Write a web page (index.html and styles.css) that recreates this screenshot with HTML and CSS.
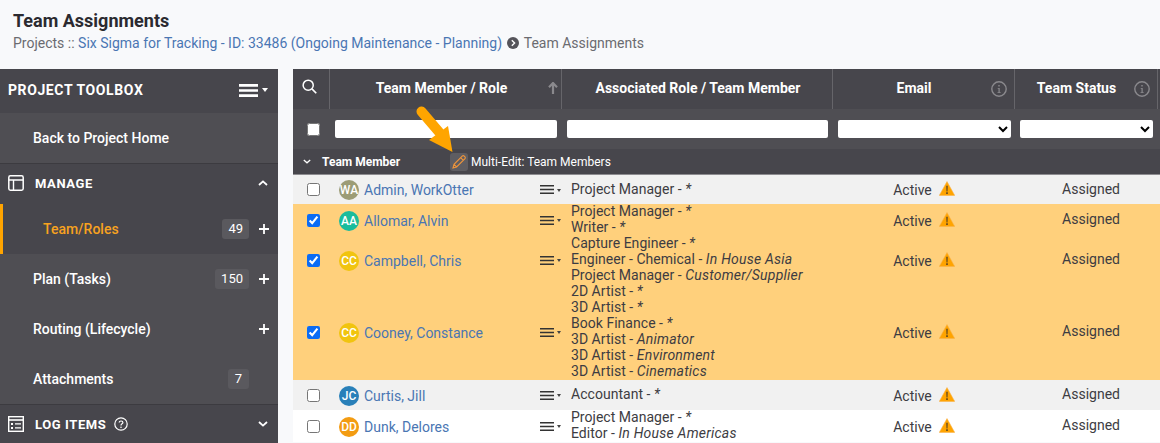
FILE: index.html
```html
<!DOCTYPE html>
<html lang="en">
<head>
<meta charset="utf-8">
<title>Team Assignments</title>
<link rel="stylesheet" href="styles.css">
</head>
<body>
<svg class="defs" width="0" height="0" aria-hidden="true">
  <symbol id="bars" viewBox="0 0 14 9"><path d="M0 .8h14M0 4.5h14M0 8.2h14" fill="none" stroke="currentColor" stroke-width="1.5"/></symbol>
  <symbol id="bars-bold" viewBox="0 0 19 13"><path d="M0 1.4h19M0 6.5h19M0 11.6h19" fill="none" stroke="currentColor" stroke-width="2.6"/></symbol>
  <symbol id="warn" viewBox="0 0 16 15"><path d="M8 .6 15.7 14.4H.3z" fill="#ffa400" stroke="#f9b24a" stroke-width=".6"/><path d="M7.3 4.8h1.4l-.2 5.6h-1zM7.2 11.2h1.6v1.7H7.2z" fill="#5a4320"/></symbol>
  <symbol id="info" viewBox="0 0 16 16"><circle cx="8" cy="8" r="7.2" fill="none" stroke="currentColor" stroke-width="1.4"/><path d="M6.7 6.9h2v4.4h1v.8H6.5v-.8h1V7.7h-.8zM7.3 3.9h1.4v1.6H7.3z" fill="currentColor"/></symbol>
  <symbol id="plus" viewBox="0 0 10 10"><path d="M5 0v10M0 5h10" fill="none" stroke="currentColor" stroke-width="1.8"/></symbol>
</svg>

<header class="page-head">
  <h1 class="page-title">Team Assignments</h1>
  <p class="crumbs">Projects :: <a class="link" href="#">Six Sigma for Tracking - ID: 33486 (Ongoing Maintenance - Planning)</a>
    <svg class="crumb-sep" viewBox="0 0 12 12"><circle cx="6" cy="6" r="6" fill="#55545a"/><path d="M4.8 3.2 7.6 6 4.8 8.8" fill="none" stroke="#fff" stroke-width="1.4"/></svg>
    Team Assignments</p>
</header>

<div class="content">
  <aside class="sidebar">
    <div class="tool-head">
      <span class="tool-title">PROJECT TOOLBOX</span>
      <svg class="tool-bars"><use href="#bars-bold"/></svg>
      <span class="caret-w"></span>
    </div>
    <a class="nav-item nav-back" href="#"><span class="nav-label">Back to Project Home</span></a>
    <div class="section section-manage">
      <svg class="sec-icon" viewBox="0 0 16 16"><rect x=".8" y=".8" width="14.4" height="14.4" rx="1.6" fill="none" stroke="currentColor" stroke-width="1.5"/><path d="M.8 5h14.4M5.5 5v10" fill="none" stroke="currentColor" stroke-width="1.4"/></svg>
      <span class="sec-label">MANAGE</span>
      <svg class="sec-chev" viewBox="0 0 10 6"><path d="M1 5 5 1.4 9 5" fill="none" stroke="currentColor" stroke-width="1.8"/></svg>
    </div>
    <a class="nav-item nav-active" href="#"><span class="nav-label">Team/Roles</span><span class="badge">49</span><svg class="nav-plus"><use href="#plus"/></svg></a>
    <a class="nav-item" href="#"><span class="nav-label">Plan (Tasks)</span><span class="badge">150</span><svg class="nav-plus"><use href="#plus"/></svg></a>
    <a class="nav-item" href="#"><span class="nav-label">Routing (Lifecycle)</span><svg class="nav-plus"><use href="#plus"/></svg></a>
    <a class="nav-item nav-noplus" href="#"><span class="nav-label">Attachments</span><span class="badge">7</span></a>
    <div class="section section-log">
      <svg class="sec-icon" viewBox="0 0 16 16"><rect x=".7" y=".7" width="14.6" height="14.6" fill="none" stroke="currentColor" stroke-width="1.4"/><path d="M.7 4h14.6" stroke="currentColor" stroke-width="1.6"/><path d="M3 7h2v2H3zM3 11h2v2H3zM7 7.2h6v1.3H7zM7 11.2h6v1.3H7z" fill="currentColor"/></svg>
      <span class="sec-label">LOG ITEMS</span>
      <svg class="sec-help" viewBox="0 0 14 14"><circle cx="7" cy="7" r="6.2" fill="none" stroke="currentColor" stroke-width="1.2"/><path d="M5.2 5.6C5.2 3.4 8.9 3.5 8.9 5.5 8.9 6.9 7 6.8 7 8.4" fill="none" stroke="currentColor" stroke-width="1.2"/><circle cx="7" cy="10.3" r=".8" fill="currentColor"/></svg>
      <svg class="sec-chev" viewBox="0 0 10 6"><path d="M1 1 5 4.6 9 1" fill="none" stroke="currentColor" stroke-width="1.8"/></svg>
    </div>
  </aside>

  <main class="grid">
    <div class="row row-head">
      <div class="hcell hcell-search"><svg class="search" viewBox="0 0 16 16"><circle cx="6.6" cy="6.6" r="5.4" fill="none" stroke="currentColor" stroke-width="1.6"/><path d="m10.6 10.6 4.6 4.6" stroke="currentColor" stroke-width="1.8"/></svg></div>
      <div class="hcell hcell-member">Team Member / Role<svg class="sort" viewBox="0 0 10 12"><path d="M5 12V1.5M1 5.2 5 1l4 4.2" fill="none" stroke="currentColor" stroke-width="2.2"/></svg></div>
      <div class="hcell hcell-assoc">Associated Role / Team Member</div>
      <div class="hcell hcell-info">Email<svg class="info"><use href="#info"/></svg></div>
      <div class="hcell hcell-info">Team Status<svg class="info"><use href="#info"/></svg></div>
      <div class="hcell"></div>
    </div>

    <div class="row row-filter">
      <div class="fcell fcell-check"><input class="check" type="checkbox"></div>
      <div class="fcell"><input class="finput" type="text"></div>
      <div class="fcell"><input class="finput" type="text"></div>
      <div class="fcell"><select class="fselect"><option></option></select></div>
      <div class="fcell"><select class="fselect"><option></option></select></div>
      <div class="fcell"></div>
    </div>

    <div class="group">
      <svg class="group-chev" viewBox="0 0 10 6"><path d="M1 1 5 4.6 9 1" fill="none" stroke="currentColor" stroke-width="1.6"/></svg>
      <span class="group-name">Team Member</span>
      <span class="pencil-box"><svg class="pencil" viewBox="0 0 14 14"><path d="M10.2 1.2a1.5 1.5 0 0 1 2.1 0l.5.5a1.5 1.5 0 0 1 0 2.1L4.6 12 1 13l1-3.6zM8.8 2.8l2.4 2.4M2 9.4 4.6 12" fill="none" stroke="#f0953a" stroke-width="1.1"/></svg></span>
      <span class="group-edit">Multi-Edit: Team Members</span>
    </div>

    <div class="row row-data row-grey row-one">
      <div class="cell cell-check"><input class="check" type="checkbox"></div>
      <div class="cell cell-name"><span class="avatar av-wa">WA</span><a class="link" href="#">Admin, WorkOtter</a><svg class="row-bars"><use href="#bars"/></svg><span class="caret-d"></span></div>
      <div class="cell cell-role"><div>Project Manager - <i>*</i></div></div>
      <div class="cell cell-email">Active<svg class="warn"><use href="#warn"/></svg></div>
      <div class="cell cell-status">Assigned</div>
    </div>
    <div class="row row-data row-sel">
      <div class="cell cell-check"><input class="check" type="checkbox" checked></div>
      <div class="cell cell-name"><span class="avatar av-aa">AA</span><a class="link" href="#">Allomar, Alvin</a><svg class="row-bars"><use href="#bars"/></svg><span class="caret-d"></span></div>
      <div class="cell cell-role"><div>Project Manager - <i>*</i></div><div>Writer - <i>*</i></div></div>
      <div class="cell cell-email">Active<svg class="warn"><use href="#warn"/></svg></div>
      <div class="cell cell-status">Assigned</div>
    </div>
    <div class="row row-data row-sel">
      <div class="cell cell-check"><input class="check" type="checkbox" checked></div>
      <div class="cell cell-name"><span class="avatar av-cc">CC</span><a class="link" href="#">Campbell, Chris</a><svg class="row-bars"><use href="#bars"/></svg><span class="caret-d"></span></div>
      <div class="cell cell-role"><div>Capture Engineer - <i>*</i></div><div>Engineer - Chemical - <i>In House Asia</i></div><div>Project Manager - <i>Customer/Supplier</i></div></div>
      <div class="cell cell-email">Active<svg class="warn"><use href="#warn"/></svg></div>
      <div class="cell cell-status">Assigned</div>
    </div>
    <div class="row row-data row-sel">
      <div class="cell cell-check"><input class="check" type="checkbox" checked></div>
      <div class="cell cell-name"><span class="avatar av-cc">CC</span><a class="link" href="#">Cooney, Constance</a><svg class="row-bars"><use href="#bars"/></svg><span class="caret-d"></span></div>
      <div class="cell cell-role"><div>2D Artist - <i>*</i></div><div>3D Artist - <i>*</i></div><div>Book Finance - <i>*</i></div><div>3D Artist - <i>Animator</i></div><div>3D Artist - <i>Environment</i></div><div>3D Artist - <i>Cinematics</i></div></div>
      <div class="cell cell-email">Active<svg class="warn"><use href="#warn"/></svg></div>
      <div class="cell cell-status">Assigned</div>
    </div>
    <div class="row row-data row-grey row-one-tall">
      <div class="cell cell-check"><input class="check" type="checkbox"></div>
      <div class="cell cell-name"><span class="avatar av-jc">JC</span><a class="link" href="#">Curtis, Jill</a><svg class="row-bars"><use href="#bars"/></svg><span class="caret-d"></span></div>
      <div class="cell cell-role"><div>Accountant - <i>*</i></div></div>
      <div class="cell cell-email">Active<svg class="warn"><use href="#warn"/></svg></div>
      <div class="cell cell-status">Assigned</div>
    </div>
    <div class="row row-data row-white">
      <div class="cell cell-check"><input class="check" type="checkbox"></div>
      <div class="cell cell-name"><span class="avatar av-dd">DD</span><a class="link" href="#">Dunk, Delores</a><svg class="row-bars"><use href="#bars"/></svg><span class="caret-d"></span></div>
      <div class="cell cell-role"><div>Project Manager - <i>*</i></div><div>Editor - <i>In House Americas</i></div></div>
      <div class="cell cell-email">Active<svg class="warn"><use href="#warn"/></svg></div>
      <div class="cell cell-status">Assigned</div>
    </div>

    <svg class="callout" viewBox="0 0 44 48"><path d="M8.5 6.5 26 27" fill="none" stroke="#ffa500" stroke-width="10" stroke-linecap="round"/><path d="M35 21 16 35 39.5 47z" fill="#ffa500"/></svg>
  </main>
</div>
</body>
</html>
```
FILE: styles.css
```css
* { box-sizing: border-box; }
html, body { height: 100%; }
body {
  margin: 0;
  height: 443px;
  overflow: hidden;
  background: #f8f9fb;
  font-family: Roboto, "Liberation Sans", sans-serif;
  font-size: 14px;
  color: #3d3c42;
}
.defs { position: absolute; }
.link { color: #4a76b3; text-decoration: none; }

.page-head { height: 69px; padding: 11px 13px 0; }
.page-title { margin: 0; font-size: 18px; line-height: 20px; font-weight: 700; color: #2b2a30; }
.crumbs { margin: 4px 0 0; font-size: 14px; line-height: 17px; color: #6b6b70; }
.crumb-sep { width: 12px; height: 12px; margin: 0 2px 0 1px; vertical-align: -1px; }

.content { display: flex; gap: 15px; height: 374px; }

.sidebar { flex: 0 0 278px; display: flex; flex-direction: column; background: #4f4e53; color: #fff; overflow: hidden; }
.tool-head { flex: 0 0 44px; display: flex; align-items: center; padding: 0 10px 2px 8px; background: #47464c; }
.tool-title { flex: 1; font-weight: 700; font-size: 14px; letter-spacing: .6px; }
.tool-bars { width: 19px; height: 13px; color: #fff; }
.caret-w { margin-left: 4px; border: 3px solid transparent; border-top: 4px solid #fff; border-bottom: 0; }

.nav-item { flex: 0 0 50px; display: flex; align-items: center; padding: 0 9px 0 33px; color: #fff; text-decoration: none; font-weight: 500; font-size: 14px; }
.nav-label { flex: 1; }
.nav-back { flex-basis: 51px; border-bottom: 1px solid #3c3b40; }
.nav-active { background: #47464c; border-left: 3px solid #ffa400; padding-left: 40px; color: #f8a21f; }
.nav-noplus { padding-right: 29px; }
.badge { min-width: 21px; height: 20px; padding: 0 6px; margin-right: 10px; border-radius: 3px; background: #5a595e; color: #fff; font-size: 13px; font-weight: 400; line-height: 20px; text-align: center; }
.nav-noplus .badge { margin-right: 0; }
.nav-plus { width: 10px; height: 10px; color: #fff; }

.section { flex: 0 0 40px; display: flex; align-items: center; padding: 0 8px; background: #47464c; color: #fff; }
.section-manage { padding-bottom: 2px; }
.section-log { flex: 0 0 39px; border-top: 1px solid #3c3b40; }
.sec-icon { width: 16px; height: 16px; margin-right: 11px; }
.sec-label { font-weight: 700; font-size: 13px; letter-spacing: .6px; }
.sec-chev { width: 10px; height: 6px; margin-left: auto; margin-right: 2px; }
.sec-help { width: 14px; height: 14px; margin-left: 8px; }

.grid { position: relative; flex: 1; min-width: 0; overflow: hidden; }
.row { display: grid; grid-template-columns: 37px 232px 271px 182px 143px 2px; }

.row-head { height: 40px; background: #47464c; color: #fff; font-weight: 700; font-size: 14px; }
.hcell { display: flex; align-items: center; justify-content: center; position: relative; border-right: 1px solid #66656a; padding-bottom: 2px; }
.hcell:last-child { border-right: 0; }
.hcell-search { justify-content: flex-start; padding-left: 9px; padding-bottom: 6px; }
.hcell-member { padding-right: 8px; }
.hcell-assoc { padding-left: 2px; }
.hcell-info { padding-right: 19px; }
.search { width: 15px; height: 15px; color: #fff; }
.sort { position: absolute; right: 3px; top: 13px; width: 10px; height: 12px; color: #8a898d; }
.info { position: absolute; right: 7px; top: 12px; width: 16px; height: 16px; color: #8a898d; }

.row-filter { height: 40px; background: #4f4e53; }
.fcell { display: flex; align-items: center; padding: 0 5px; }
.fcell:nth-child(4) { padding-right: 4px; }
.fcell-check { justify-content: center; padding: 0 2px 0 6px; }
.finput, .fselect { width: 100%; height: 18px; border: 0; border-radius: 2px; background: #fff; padding: 0 2px; margin: 0; font: 12px Roboto, sans-serif; }

.group { height: 26px; display: flex; align-items: center; background: #47464c; color: #fff; border-bottom: 1px solid #8d8c90; font-size: 12px; }
.group-chev { width: 8px; height: 5px; margin-left: 10px; }
.group-name { margin-left: 11px; width: 128px; font-weight: 700; }
.pencil-box { display: flex; align-items: center; justify-content: center; width: 18px; height: 18px; border-radius: 3px; background: #5e5d62; }
.pencil { width: 14px; height: 14px; }
.group-edit { margin-left: 3px; padding-top: 1px; font-weight: 400; }

.check { width: 13px; height: 13px; margin: 0; accent-color: #0b6cf5; }
.row-data { font-size: 14px; line-height: 16px; }
.row-one { min-height: 29px; }
.row-one-tall { min-height: 30px; }
.row-grey { background: #f1f1f1; }
.row-sel { background: #ffd07c; }
.row-white { background: #fff; }

.cell { display: flex; align-items: center; min-width: 0; }
.cell-check { padding-left: 7px; justify-content: center; padding-right: 3px; }
.cell-name { padding-left: 9px; }
.cell-name .avatar, .cell-name .link { margin-top: 2px; }
.row-one .cell-name .avatar, .row-one .cell-name .link { margin-top: 0; }
.avatar { flex: none; width: 20px; height: 20px; margin-right: 5px; border-radius: 50%; color: #fff; font-size: 12px; font-weight: 500; line-height: 20px; text-align: center; }
.av-wa { background: #9c9c76; }
.av-aa { background: #1abc9c; }
.av-cc { background: #f1c40f; }
.av-jc { background: #2980b9; }
.av-dd { background: #f39c12; }
.row-bars { width: 14px; height: 9px; margin-left: auto; color: #333; }
.caret-d { margin: 1px 1px 0 3px; border: 2px solid transparent; border-top: 3px solid #444; border-bottom: 0; }
.cell-role { display: block; align-self: center; padding-left: 9px; white-space: nowrap; letter-spacing: .03px; transform: translateY(-1px); }
.cell-role i { letter-spacing: .22px; }
.cell-email { justify-content: center; padding-top: 2px; }
.row-one .cell-email { padding-top: 0; }
.warn { width: 16px; height: 15px; margin-left: 7px; margin-top: -4px; }
.row-one .warn { margin-top: -3px; }
.cell-status { justify-content: center; padding-left: 9px; padding-bottom: 2px; }

.callout { position: absolute; left: 120px; top: 36px; width: 44px; height: 48px; }
```
